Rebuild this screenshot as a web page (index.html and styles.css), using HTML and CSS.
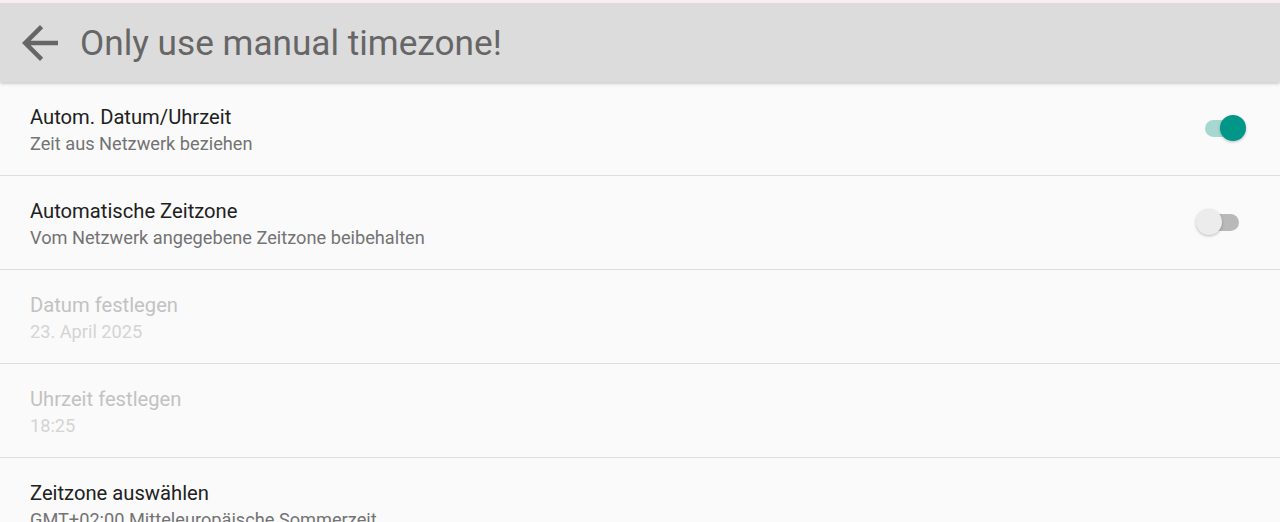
FILE: index.html
```html
<!DOCTYPE html>
<html lang="de">
<head>
    <meta charset="UTF-8">
    <title>Datum &amp; Uhrzeit</title>
    <link rel="stylesheet" href="styles.css">
</head>
<body>
    <div class="status-strip"></div>

    <header class="toolbar">
        <svg class="back-icon" viewBox="0 0 24 24">
            <path d="M20 11H7.83l5.59-5.59L12 4l-8 8 8 8 1.41-1.41L7.83 13H20v-2z" fill="#666"/>
        </svg>
        <h1>Only use manual timezone!</h1>
    </header>

    <div class="pref-list">
        <div class="pref">
            <div class="pref-text">
                <div class="pref-title">Autom. Datum/Uhrzeit</div>
                <div class="pref-summary">Zeit aus Netzwerk beziehen</div>
            </div>
            <div class="switch on"><span class="thumb"></span></div>
        </div>

        <div class="pref">
            <div class="pref-text">
                <div class="pref-title">Automatische Zeitzone</div>
                <div class="pref-summary">Vom Netzwerk angegebene Zeitzone beibehalten</div>
            </div>
            <div class="switch"><span class="thumb"></span></div>
        </div>

        <div class="pref disabled">
            <div class="pref-text">
                <div class="pref-title">Datum festlegen</div>
                <div class="pref-summary">23. April 2025</div>
            </div>
        </div>

        <div class="pref disabled">
            <div class="pref-text">
                <div class="pref-title">Uhrzeit festlegen</div>
                <div class="pref-summary">18:25</div>
            </div>
        </div>

        <div class="pref">
            <div class="pref-text">
                <div class="pref-title">Zeitzone auswählen</div>
                <div class="pref-summary">GMT+02:00 Mitteleuropäische Sommerzeit</div>
            </div>
        </div>
    </div>
</body>
</html>
```

FILE: styles.css
```css
body {
    margin: 0;
    font-family: Roboto, "Noto Sans", sans-serif;
    background-color: #fafafa;
    color: #212121;
    overflow: hidden;
}

.status-strip {
    height: 3px;
    background-color: #fbeef0;
}

.toolbar {
    height: 79px;
    display: flex;
    align-items: center;
    background-color: #dcdcdc;
    box-shadow: 0 2px 3px rgba(0, 0, 0, 0.18);
    position: relative;
    z-index: 1;
}

.back-icon {
    margin-left: 13px;
    margin-right: 13px;
    width: 54px;
    height: 54px;
}

.toolbar h1 {
    margin: 0;
    font-size: 35.2px;
    font-weight: 400;
    color: #666;
}

.pref {
    height: 93px;
    display: flex;
    align-items: center;
    justify-content: space-between;
    padding: 0 41px 0 30px;
    border-bottom: 1px solid #dedede;
}

.pref-text {
    margin-top: 2px;
}

.pref-title {
    font-size: 20.2px;
    line-height: 26px;
    color: #212121;
}

.pref-summary {
    font-size: 18.2px;
    line-height: 24px;
    margin-top: 2px;
    color: #737373;
}

.disabled .pref-title {
    color: #c2c2c2;
}

.disabled .pref-summary {
    color: #d4d4d4;
}

.switch {
    position: relative;
    width: 34px;
    height: 17px;
    border-radius: 9px;
    background-color: #b9b9b9;
}

.switch .thumb {
    position: absolute;
    top: -5px;
    left: -9px;
    width: 26px;
    height: 26px;
    border-radius: 50%;
    background-color: #ececec;
    box-shadow: 0 1px 3px rgba(0, 0, 0, 0.25);
}

.switch.on {
    background-color: #a6d8d1;
}

.switch.on .thumb {
    left: auto;
    right: -7px;
    background-color: #009688;
}
```
